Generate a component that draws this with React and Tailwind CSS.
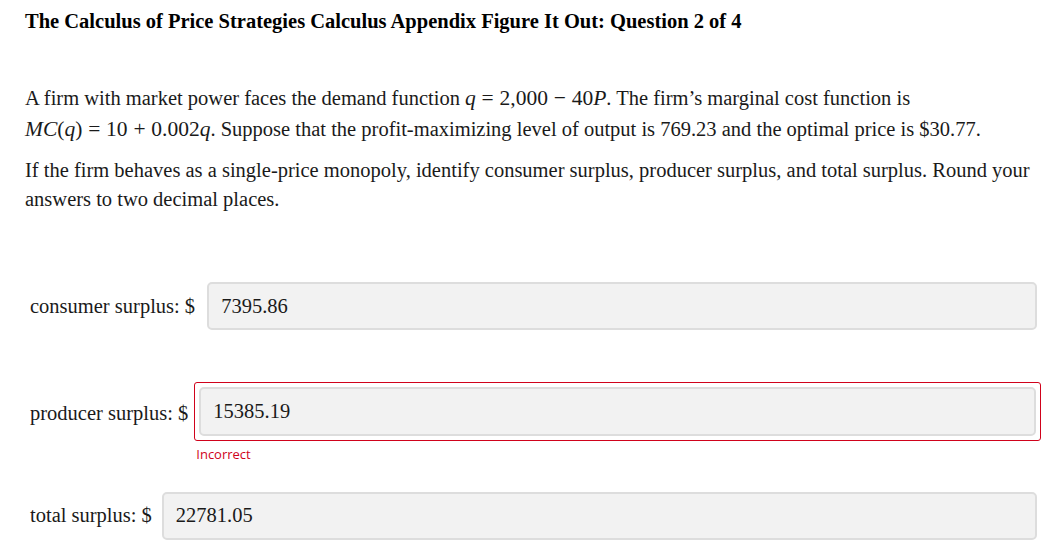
import React from 'react';

const serif = { fontFamily: '"Liberation Serif", "Times New Roman", serif' };

function AnswerInput({ value, tall }) {
  return (
    <div className={`flex-1 flex items-center pl-3 bg-[#f2f2f2] border-2 border-[#dddddd] rounded-[5px] text-[20.5px] text-[#1a1a1a] ${tall ? 'h-[49px]' : 'h-[48px]'}`}>
      {value}
    </div>
  );
}

function Op({ children }) {
  return <span className="mx-[0.27em]">{children}</span>;
}

function M({ children }) {
  return <span className="text-[21.5px] leading-[20px]">{children}</span>;
}

export default function App() {
  return (
    <div className="w-[1054px] h-[554px] bg-white text-[#1a1a1a] overflow-hidden" style={serif}>
      <h1 className="pl-[25px] pt-[8px] text-[20.5px] font-bold text-black leading-[26px]">
        The Calculus of Price Strategies Calculus Appendix Figure It Out: Question 2 of 4
      </h1>

      <div className="pl-[25px] pr-4 pt-[49px] text-[20.5px]">
        <p className="leading-[31px]">
          A firm with market power faces the demand function{' '}
          <M><i>q</i><Op>=</Op>2,000<Op>−</Op>40<i>P</i></M>. The firm’s marginal cost function is{' '}
          <br />
          <M><i>MC</i>(<i>q</i>)<Op>=</Op>10<Op>+</Op>0.002<i>q</i></M>. Suppose that the profit-maximizing level of output is 769.23 and the optimal price is $30.77.
        </p>
        <p className="mt-[11px] leading-[29px]">
          If the firm behaves as a single-price monopoly, identify consumer surplus, producer surplus, and total surplus. Round your answers to two decimal places.
        </p>
      </div>

      <div className="pl-[30px] pr-[17px] mt-[68px]">
        <div className="flex items-center">
          <span className="text-[20.5px] mr-3">consumer surplus: $</span>
          <AnswerInput value="7395.86" />
        </div>

        <div className="mt-[52px] flex items-start">
          <span className="text-[20.5px] mr-[6px] mt-[16px]">producer surplus: $</span>
          <div className="flex-1 -mr-[4px]">
            <div className="border border-[#d0021b] rounded-[3px] p-1">
              <AnswerInput value="15385.19" tall />
            </div>
            <div className="mt-[4px] ml-[2px] text-[13px] text-[#d0021b]" style={{ fontFamily: '"Open Sans", "Noto Sans", sans-serif' }}>
              Incorrect
            </div>
          </div>
        </div>

        <div className="mt-[27px] flex items-center">
          <span className="text-[20.5px] mr-[10px]">total surplus: $</span>
          <AnswerInput value="22781.05" />
        </div>
      </div>
    </div>
  );
}
